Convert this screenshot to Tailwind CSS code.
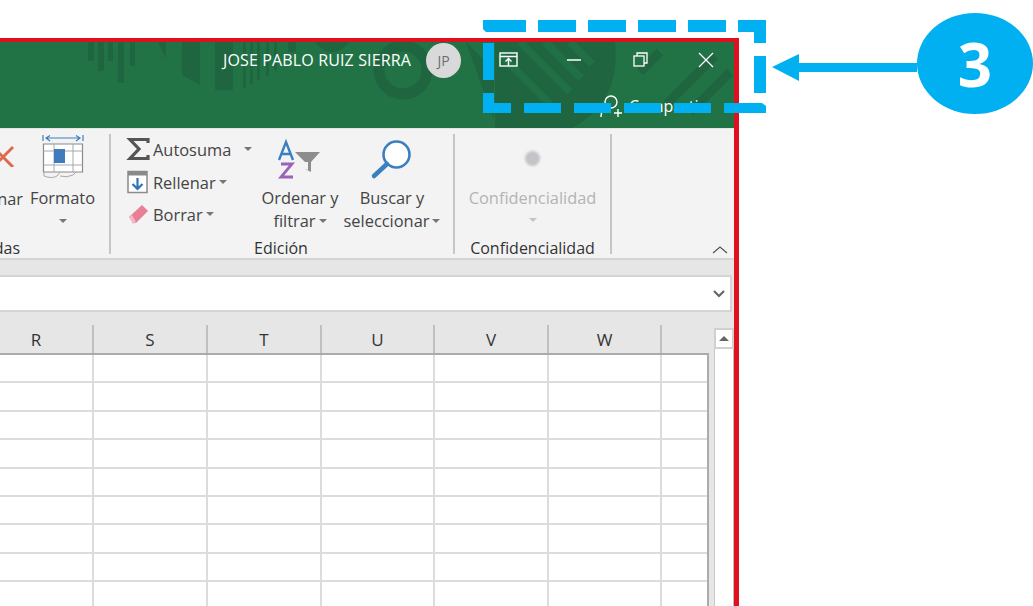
<!DOCTYPE html>
<html lang="es">
<head>
    <meta charset="UTF-8">
    <title>Excel - cinta de opciones</title>
    <script src="https://cdn.jsdelivr.net/npm/@tailwindcss/browser@4"></script>
</head>
<body class="bg-white">
<div class="relative w-[1033px] h-[606px] overflow-hidden bg-white font-['Open_Sans',sans-serif]">

    <!-- Ventana -->
    <div class="absolute left-0 top-[38px] w-[739px] h-[568px] border-t-4 border-r-[5px] border-[#e0101f] flex flex-col bg-white">

        <!-- Barra verde -->
        <div class="relative h-[87px] bg-[#217346] border-b border-[#dfe8e2] shrink-0 overflow-hidden">
            <svg class="absolute left-0 top-0" width="734" height="87" fill="#1f6540">
                <rect x="88" y="0" width="6" height="19"/><rect x="98" y="0" width="6" height="29"/><rect x="108" y="0" width="5" height="19"/><rect x="118" y="0" width="6" height="41"/><rect x="130" y="0" width="5" height="24"/>
                <path d="M158 0h8v17zM182 0h18v43l-18-10z"/>
                <path d="M215 0h18v48h-18zM243 0h3v46h-3zM250 0h3v42h-3zM257 0h3v38h-3zM266 0h3v34h-3zM274 0h3v28h-3zM288 0h8v10h-8z"/>
                <path d="M315 0h34q-8 10-17 10t-17-10z"/>
                <circle cx="403" cy="28" r="24" fill="none" stroke="#1f6540" stroke-width="11"/>
                <path d="M466 0l28 28v50z"/>
                <path d="M495 0h120c4 40-10 70-45 87h-75z"/>
                <path d="M500 12l50 50M520 0l50 50M545 0l36 36M570 0l22 22" stroke="#216f44" stroke-width="8"/>
                <path d="M667 62l48-48M690 70l40-40M640 30l20-20" stroke="#1f6540" stroke-width="9"/>
            </svg>
            <div class="relative flex h-[36px] items-center">
                <span class="ml-[223px] w-[203px] text-white text-[16px] tracking-[0.14px] whitespace-nowrap">JOSE PABLO RUIZ SIERRA</span>
                <span class="w-[35px] h-[35px] rounded-full bg-[#d9d9d9] text-[#6b6b75] text-[14px] flex items-center justify-center">JP</span>
                <!-- Controles de ventana -->
                <div class="ml-[38px] flex items-center gap-[47px]">
                    <svg width="20" height="16" fill="none" stroke="#fff" stroke-width="1.4"><rect x="1" y="1" width="17" height="13"/><path d="M1 4.5h17M9.5 14V7M6.5 9.5l3-3 3 3"/></svg>
                    <svg width="18" height="16" fill="none" stroke="#fff" stroke-width="1.5"><path d="M1 8h14"/></svg>
                    <svg width="16" height="16" fill="none" stroke="#fff" stroke-width="1.3" class="ml-[2px]"><rect x="1" y="4" width="10" height="10"/><path d="M4 4V1h10v10h-3"/></svg>
                    <svg width="18" height="18" fill="none" stroke="#fff" stroke-width="1.3" class="ml-[1px]"><path d="M2 2l14 14M16 2L2 16"/></svg>
                </div>
            </div>
            <div class="relative flex items-center h-[40px] mt-[8px] pl-[599px] text-white text-[16px] gap-[6px]">
                <svg width="24" height="24" fill="none" stroke="#fff" stroke-width="1.4"><circle cx="12" cy="8" r="6"/><path d="M2 23c0-5 2-8 5-10M15 19h8M19 15v8"/></svg>
                <span>Compartir</span>
            </div>
        </div>

        <!-- Cinta -->
        <div class="relative h-[131px] bg-[#f3f3f3] border-b-2 border-[#d4d4d4] shrink-0 flex pt-[5px] text-[#444] text-[16.4px] leading-[23px]">

            <!-- Celdas -->
            <div class="w-[111px] shrink-0 h-[120px] border-r-2 border-[#c6c6c6] flex flex-col items-end overflow-hidden">
                <div class="flex gap-[7px] pr-[14px] h-[99px]">
                    <div class="flex flex-col items-end w-[40px] overflow-hidden">
                        <svg width="24" height="24" class="mt-[9px] mb-[20px] shrink-0" fill="none" stroke="#e0694a" stroke-width="3"><path d="M-6 4l20 20M14 4L-6 24"/></svg>
                        <span>Eliminar</span>
                    </div>
                    <div class="flex flex-col items-center w-[65px]">
                        <svg width="42" height="46" fill="none" class="mb-[6px] shrink-0">
                            <path d="M1 1v6M41 1v6M4 4h34M8 1.500L4 4l4 3M34 1.500L38 4l-4 3" stroke="#3b7fc0" stroke-width="1.200"/>
                            <path d="M1.500 10h39v28h-39z" fill="#fff" stroke="#8a8a8a" stroke-width="1.200"/>
                            <path d="M1.500 17h39M1.500 31h39M12 10v28M31 10v28" stroke="#a8a8a8"/>
                            <rect x="12" y="15" width="11" height="14" fill="#3f7cbd"/>
                            <path d="M2 38v4q8 3 13 0l3-4M18 42q7 2 13-1l3-3" stroke="#a8a8a8"/>
                        </svg>
                        <span>Formato</span>
                        <span class="mt-[10px] w-0 h-0 border-x-[4px] border-x-transparent border-t-[4px] border-t-[#777]"></span>
                    </div>
                </div>
                <span class="text-[16px] text-[#333] pr-[89px] mt-[9px] leading-[12px] whitespace-nowrap">Celdas</span>
            </div>

            <!-- Edicion -->
            <div class="w-[344px] shrink-0 h-[120px] border-r-2 border-[#c6c6c6] flex flex-col">
                <div class="flex h-[99px]">
                    <div class="w-[135px] pl-[15px] pt-[4px] flex flex-col gap-[11px]">
                        <div class="flex items-center h-[22px]">
                            <svg width="24" height="24" class="shrink-0" fill="none" stroke="#555" stroke-width="3.200"><path d="M22 6V2.500H4l9 9.500-9 9.500h18V18"/></svg>
                            <span class="ml-[3px]">Autosuma</span>
                            <span class="ml-[13px] w-0 h-0 border-x-[4px] border-x-transparent border-t-[4px] border-t-[#777]"></span>
                        </div>
                        <div class="flex items-center h-[22px]">
                            <svg width="24" height="24" class="shrink-0" fill="none"><rect x="2" y="1.500" width="19" height="21" fill="#fff" stroke="#8a8a8a" stroke-width="1.500"/><rect x="2" y="1.500" width="19" height="4" fill="#8a8a8a"/><path d="M11.500 8v11M6.500 14l5 5 5-5" stroke="#2f75b5" stroke-width="2.200"/></svg>
                            <span class="ml-[3px]">Rellenar</span>
                            <span class="ml-[3px] w-0 h-0 border-x-[4px] border-x-transparent border-t-[4px] border-t-[#777]"></span>
                        </div>
                        <div class="flex items-center h-[22px] -mt-[1px]">
                            <svg width="24" height="24" class="shrink-0"><path d="M3 15L16 3l6 6-12 12H7z" fill="#e97f96"/><path d="M3 15l4 7 3-2-4-7z" fill="#f3b9c5"/></svg>
                            <span class="ml-[3px]">Borrar</span>
                            <span class="ml-[3px] w-0 h-0 border-x-[4px] border-x-transparent border-t-[4px] border-t-[#777]"></span>
                        </div>
                    </div>
                    <div class="w-[108px] flex flex-col items-center">
                        <svg width="46" height="44" class="shrink-0 mt-[4px] mb-[1px]" fill="none">
                            <path d="M2 22L9 4l7 18M4.500 16h9" stroke="#3b7fc0" stroke-width="2.400"/>
                            <path d="M4 26h11L4 39h12" stroke="#9a63b8" stroke-width="2.800"/>
                            <path d="M18 14h25l-9 10v10l-6-3V24z" fill="#8d8d8d"/><path d="M28 24h3v8l-3-1z" fill="#f3f3f3"/>
                        </svg>
                        <span class="mt-[3px] whitespace-nowrap">Ordenar y</span>
                        <span class="flex items-center">filtrar<span class="ml-[3px] w-0 h-0 border-x-[4px] border-x-transparent border-t-[4px] border-t-[#777]"></span></span>
                    </div>
                    <div class="w-[84px] -ml-[4px] flex flex-col items-center">
                        <svg width="44" height="44" class="shrink-0 mt-[4px] mb-[1px]" fill="none"><circle cx="26.500" cy="16.500" r="13" fill="#fff" stroke="#3b7fc0" stroke-width="2.600"/><path d="M17 26L4 38" stroke="#3b7fc0" stroke-width="4.500" stroke-linecap="round"/></svg>
                        <span class="mt-[3px] whitespace-nowrap">Buscar y</span>
                        <span class="flex items-center whitespace-nowrap">seleccionar<span class="ml-[3px] w-0 h-0 border-x-[4px] border-x-transparent border-t-[4px] border-t-[#777]"></span></span>
                    </div>
                </div>
                <span class="text-[16px] text-[#333] mt-[9px] ml-[143px] leading-[12px]">Edición</span>
            </div>

            <!-- Confidencialidad -->
            <div class="w-[157px] shrink-0 h-[120px] border-r-2 border-[#c6c6c6] flex flex-col items-center">
                <div class="h-[99px] flex flex-col items-center text-[#b4b4b4]">
                    <span class="mt-[17px] w-[15px] h-[15px] rounded-full bg-[#c4c4c8] blur-[1px]"></span>
                    <span class="mt-[20px] whitespace-nowrap">Confidencialidad</span>
                    <span class="mt-[9px] w-0 h-0 border-x-[4px] border-x-transparent border-t-[4px] border-t-[#c4c4c4]"></span>
                </div>
                <span class="text-[16px] text-[#333] mt-[9px] leading-[12px] whitespace-nowrap">Confidencialidad</span>
            </div>

            <div class="grow flex items-end justify-end pr-[6px] pb-[4px]">
                <svg width="16" height="9" fill="none" stroke="#555" stroke-width="1.200"><path d="M1 8l7-6 7 6"/></svg>
            </div>
        </div>

        <!-- Barra de formulas -->
        <div class="h-[65px] bg-[#e6e6e6] shrink-0 pt-[15px] pr-[2px]">
            <div class="h-[37px] bg-white border-y-2 border-r-2 border-[#d4d4d4] flex items-center justify-end pr-[5px]">
                <svg width="12" height="8" fill="none" stroke="#666" stroke-width="2.200"><path d="M1 1l5 5 5-5"/></svg>
            </div>
        </div>

        <!-- Hoja -->
        <div class="grow flex bg-[#e6e6e6] min-h-0">
            <div class="w-[709px] shrink-0 overflow-hidden">
                <div id="headers" class="flex h-[30px] ml-[-20px] border-b-2 border-[#ababab] text-[#333] text-[17px]">
                    <div class="w-[114px] border-r-2 border-[#c0c0c0] flex items-center justify-center pt-[2px]">R</div>
                    <div class="w-[114px] border-r-2 border-[#c0c0c0] flex items-center justify-center pt-[2px]">S</div>
                    <div class="w-[114px] border-r-2 border-[#c0c0c0] flex items-center justify-center pt-[2px]">T</div>
                    <div class="w-[113px] border-r-2 border-[#c0c0c0] flex items-center justify-center pt-[2px]">U</div>
                    <div class="w-[114px] border-r-2 border-[#c0c0c0] flex items-center justify-center pt-[2px]">V</div>
                    <div class="w-[113px] border-r-2 border-[#c0c0c0] flex items-center justify-center pt-[2px]">W</div>
                    <div class="w-[47px]"></div>
                </div>
                <div id="cells" class="ml-[-20px] bg-white border-r-2 border-[#ababab] h-[260px]"></div>
            </div>
            <div class="w-[5px] shrink-0"></div>
            <!-- Barra de desplazamiento -->
            <div class="w-[20px] shrink-0 pt-[3px] flex flex-col">
                <div class="h-[21px] bg-white border-2 border-[#d0d0d0] flex items-center justify-center">
                    <span class="w-0 h-0 border-x-[5px] border-x-transparent border-b-[5px] border-b-[#666]"></span>
                </div>
                <div class="grow bg-white border-x border-[#c8c8c8] border-r-[#bdbdbd]"></div>
            </div>
        </div>
    </div>

    <!-- Recuadro punteado de la anotacion -->
    <svg class="absolute left-0 top-0" width="1033" height="606" fill="#00b0f0">
        <path d="M483 20h43v12h-40l-3-3zM538 20h38v12h-38zM588 20h38v12h-38zM638 20h38v12h-38zM688 20h38v12h-38zM738 20h28v23h-12V32h-16z"/>
        <path d="M754 56h12v37h-12zM724 103h38l4 3v7h-42z"/>
        <path d="M483 43h11v37h-11zM483 93h11v10h17v10h-28zM524 103h37v10h-37zM574 103h37v10h-37zM624 103h37v10h-37zM674 103h37v10h-37z"/>
        <path d="M772 67l27-13v9h118v9H799v9z"/>
        <ellipse cx="975" cy="63.500" rx="58" ry="50.500"/>
    </svg>
    <span class="absolute left-[917px] top-[13px] w-[116px] h-[101px] flex items-center justify-center text-white text-[60px] font-bold leading-none">3</span>
</div>

<script>
    // Rejilla de celdas
    const anchos = ['w-[114px]', 'w-[114px]', 'w-[114px]', 'w-[113px]', 'w-[114px]', 'w-[113px]', 'w-[47px]'];
    let html = '';
    for (let f = 0; f < 9; f++) {
        html += '<div class="flex h-[28.4px] border-b-2 border-[#dcdcdc]">';
        anchos.forEach((a, i) => {
            html += '<div class="shrink-0 ' + a + (i < 6 ? ' border-r-2 border-[#dcdcdc]' : '') + '"></div>';
        });
        html += '</div>';
    }
    document.getElementById('cells').innerHTML = html;
</script>
</body>
</html>
